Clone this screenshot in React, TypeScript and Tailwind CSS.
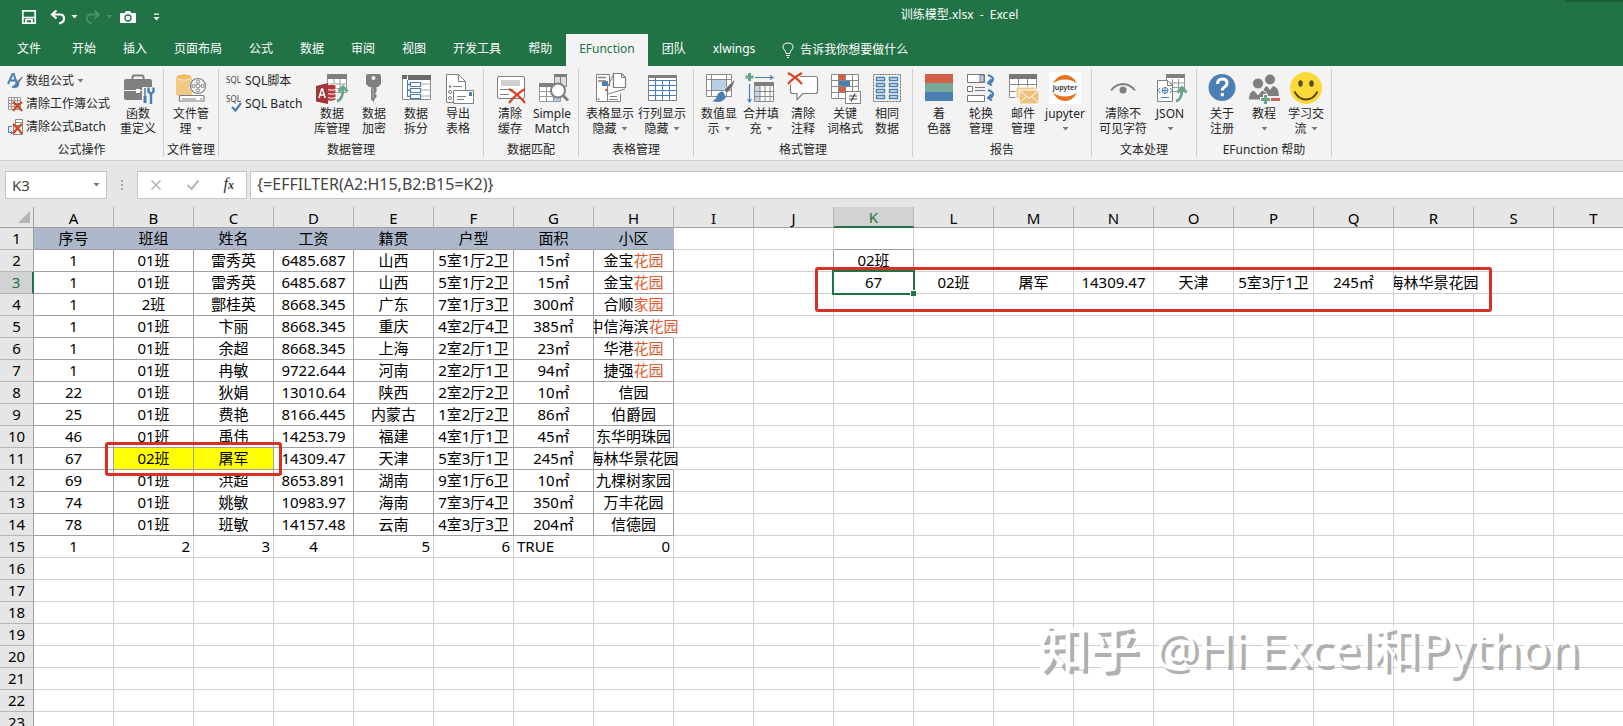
import type { ReactNode } from "react"
import { clsx } from "clsx"

const GRAY = "#7f7f7f"
const BLUE = "#4a7fb5"
const RED = "#d24726"
const GREEN = "#6aa58a"

function Caret({ className = "text-[#777777]" }: { className?: string }) {
  return (
    <svg className={clsx("inline-block shrink-0", className)} width="7" height="4" viewBox="0 0 7 4" aria-hidden="true">
      <path d="M0.5 0h6L3.5 3.5z" fill="currentColor" />
    </svg>
  )
}

function Icon({ size = 32, children }: { size?: number; children: ReactNode }) {
  return (
    <svg className="shrink-0 overflow-visible" width={size} height={size} viewBox={`0 0 ${size} ${size}`} fill="none" aria-hidden="true">
      {children}
    </svg>
  )
}

function RedCross({ x, y, w, h }: { x: number; y: number; w: number; h: number }) {
  return (
    <path
      d={`M${x} ${y}q${w * 0.6} ${h * 0.4} ${w} ${h}M${x + w} ${y}q${-w * 0.6} ${h * 0.4} ${-w} ${h}`}
      stroke={RED}
      strokeWidth="2.2"
    />
  )
}

/* ---------- small ribbon icons ---------- */

const ArrayFormulaIcon = (
  <Icon size={16}>
    <path d="M1 11L5.5 1h1.2L10 11M2.6 7.5h6" stroke={BLUE} strokeWidth="2" />
    <path d="M15.5 4l-4 6-1.6-1.3z" fill={GRAY} stroke={GRAY} />
    <path d="M10.5 9.5c-2 0-2 3-5.5 4.5 3 1.5 6.5 0.5 7-3z" fill={BLUE} stroke={BLUE} />
  </Icon>
)

const ClearBookIcon = (
  <Icon size={16}>
    <path d="M1.5 1.5h12v12h-12zM1.5 4.5h12M1.5 7.5h12M1.5 10.5h12M4.5 1.5v12M7.5 1.5v12M10.5 1.5v12" stroke="#9a9a9a" />
    <RedCross x={6} y={6} w={9} h={9} />
  </Icon>
)

const ClearBatchIcon = (
  <Icon size={16}>
    <path d="M8.5 0.5h7v6h-7zM8.5 3.5h7" fill="#fff" stroke="#8a8a8a" />
    <path d="M5 7.5H1.5v6H5M3.5 11.5l2 2-2 2" stroke={BLUE} />
    <path d="M6.5 6.5h9v9h-9z" fill="#fff" stroke="#8a8a8a" />
    <RedCross x={6} y={5} w={9} h={10} />
  </Icon>
)

const SqlIcon = (
  <Icon size={16}>
    <text x="0" y="10" fontSize="8" fill="#444">SQL</text>
  </Icon>
)

const SqlCheckIcon = (
  <Icon size={16}>
    <text x="0" y="6" fontSize="8" fill="#444">SQL</text>
    <path d="M6 11l3.5 3.5L15 7" stroke={BLUE} strokeWidth="2.2" />
  </Icon>
)

/* ---------- large ribbon icons ---------- */

const BriefcaseIcon = (
  <Icon>
    <path d="M10.5 7V5q0-1.5 1.5-1.5h8q1.5 0 1.5 1.5v2" stroke={GRAY} strokeWidth="2" />
    <path d="M4 7h24q2 0 2 2v17q0 2-2 2H4q-2 0-2-2V9q0-2 2-2z" fill={GRAY} />
    <path d="M2 18.5h28" stroke="#f3f3f3" />
    <path d="M14 17h4v4h-4z" fill="#fff" />
    <path d="M20 15h13v18H20z" fill="#f3f3f3" />
    <path d="M23 16v9" stroke={BLUE} strokeWidth="1.5" />
    <path d="M21.5 24h3v7h-3z" fill={BLUE} />
    <path d="M26.5 15.5v4L29 22l2.5-2.5v-4M29 21v11" stroke={BLUE} strokeWidth="2.4" />
  </Icon>
)

const FileManageIcon = (
  <Icon>
    <path d="M1 5v18q8 3 16 0V5z" fill="#f0c987" />
    <ellipse cx="9" cy="5" rx="8" ry="3" fill="#f3b95f" stroke="#fff" strokeWidth="0.6" />
    <circle cx="23" cy="14" r="8.5" fill="#f3f3f3" />
    <circle cx="23" cy="14" r="7.5" fill="#f8f8f8" stroke={GRAY} strokeWidth="1.2" />
    <circle cx="23" cy="14" r="2" stroke={GRAY} />
    <circle cx="23" cy="9.5" r="1.6" stroke={GRAY} />
    <circle cx="23" cy="18.5" r="1.6" stroke={GRAY} />
    <circle cx="18.5" cy="14" r="1.6" stroke={GRAY} />
    <circle cx="27.5" cy="14" r="1.6" stroke={GRAY} />
    <path d="M4.5 24.5q0-1 1-1H28q1 0 1 1V29H4.5z" fill="#fff" stroke={GRAY} strokeWidth="1.2" />
    <path d="M7 27h14M25 27h2" stroke={GRAY} strokeWidth="1.2" />
  </Icon>
)

const DatabaseIcon = (
  <Icon>
    <path d="M11.5 2.5h19v18h-19zM11.5 12h19M11.5 16.5h19M18 7v14M24 7v14" fill="#fff" stroke="#9a9a9a" />
    <path d="M11 2h20v5H11z" fill={GRAY} />
    <path d="M11 13q5-2 9 0v15q-4 2-9 1z" fill="#b5383b" stroke="#fff" />
    <path d="M11 17.5q5 1.5 9 0M11 21.5q5 1.5 9 0M11 25.5q5 1.5 9 0" stroke="#fff" />
    <path d="M0 14l12-3v21L0 29.5z" fill="#a4373a" />
    <path d="M3 26l2.7-9h0.8l2.7 9M4 23h4.2" stroke="#fff" strokeWidth="1.5" />
    <path d="M21 29q6-1 6-13M22.5 19.5l4.5-5 4.5 5" stroke={GREEN} strokeWidth="2.8" />
  </Icon>
)

const KeyIcon = (
  <Icon>
    <path d="M10 2h11q2 0 2 2v8l-3 3h-1.5v5L17 21.5l1.5 1.5v2L17 26.5 15.5 30 13 27.5V15h-2l-3-3V4q0-2 2-2z" fill={GRAY} />
    <circle cx="15.5" cy="6" r="2" fill="#f3f3f3" />
    <path d="M15 15v11" stroke="#b5b5b5" />
  </Icon>
)

const SplitIcon = (
  <Icon>
    <path d="M2.5 3.5h28v24h-28z" fill="#fff" stroke="#8a8a8a" />
    <path d="M2 3h5v4H2zM8 3h23v5H8z" fill="#6b6b6b" />
    <path d="M8 12h22M8 18h22M8 24h22" stroke="#a8a8a8" />
    <path d="M7.5 8v17M7.5 12.5h3M7.5 18.5h3M7.5 24.5h3" stroke={BLUE} />
    <path d="M10.5 10.5h10v4h-10zM10.5 16.5h10v4h-10zM10.5 22.5h10v4h-10z" fill="#fff" stroke={BLUE} strokeWidth="1.2" />
  </Icon>
)

const ExportIcon = (
  <Icon>
    <path d="M4.5 2.5h12l7 7v21h-19z" fill="#fff" stroke={GRAY} />
    <path d="M16.5 2.5v7h7M11 14.5h9" stroke={GRAY} />
    <circle cx="8" cy="14.5" r="1.2" fill={GRAY} />
    <circle cx="8" cy="20" r="1.5" stroke={GRAY} />
    <circle cx="8" cy="26" r="1.5" stroke={GRAY} />
    <path d="M11.5 18.5h20v13h-20z" fill="#fff" stroke={GRAY} />
    <path d="M27 20h3v4h-3z" fill={BLUE} />
    <path d="M15 24.5h9M15 27.5h7" stroke={GRAY} />
  </Icon>
)

const ClearCacheIcon = (
  <Icon>
    <rect x="3.5" y="4.5" width="27" height="22" rx="1.5" fill="#fff" stroke={GRAY} />
    <path d="M7 8h19v6H7z" fill="#cfcfcf" />
    <path d="M6 17.5h13M6 22.5h9" stroke={GRAY} />
    <RedCross x={15} y={17} w={16} h={14} />
  </Icon>
)

const MatchIcon = (
  <Icon>
    <path d="M18.5 2.5h12v12h-12zM24.5 5v9" fill="#ddd" stroke={GRAY} />
    <path d="M18 2h13v3H18z" fill={GRAY} />
    <path d="M3.5 11.5h21v18h-21zM3.5 19.5h21M3.5 24.5h21M10.5 15v15M17.5 15v15" fill="#fff" stroke="#9a9a9a" />
    <path d="M3 11h14v4H3z" fill={GRAY} />
    <path d="M18 24h6v5h-6z" fill="#b5cde6" />
    <circle cx="22" cy="18.5" r="7" fill="#fff" stroke={GRAY} strokeWidth="2" />
    <path d="M27 23.5l5 5" stroke={GRAY} strokeWidth="3" />
  </Icon>
)

const TableShowIcon = (
  <Icon>
    <path d="M2.5 2.5h13v27h-13z" fill="#fff" stroke={GRAY} />
    <path d="M4 5.5h8M4 9h8" stroke={GRAY} strokeWidth="1.5" />
    <path d="M8.5 9.5h5v20h13v-8" fill="#fff" stroke={GRAY} />
    <path d="M8 10h6v4H8z" fill={BLUE} />
    <path d="M4.5 26v2" stroke={GRAY} strokeWidth="1.5" />
    <path d="M13.5 15L20 1.5M12.5 22.5L31 17M15 27.5h9M16 24.5h7" stroke={GRAY} />
    <path d="M19.5 1.5h8l4 4v10h-12z" fill="#fff" stroke={GRAY} strokeWidth="1.2" />
    <path d="M27.5 1.5v4h4" stroke={GRAY} />
    <circle cx="12.5" cy="18" r="1.2" fill={RED} />
  </Icon>
)

const RowColumnIcon = (
  <Icon>
    <path d="M2.5 3.5h28v25h-28z" fill="#fff" stroke={GRAY} />
    <path d="M2.5 13.5h28M2.5 18.5h28M2.5 23.5h28M16.5 8v20M23.5 8v20" stroke={BLUE} />
    <path d="M2.5 8.5h28M9.5 4v24" stroke={BLUE} strokeWidth="1.2" />
    <path d="M2 3h29v3H2z" fill={GRAY} />
  </Icon>
)

const ValueShowIcon = (
  <Icon>
    <path d="M3.5 2.5h25v22h-25zM3.5 7.5h25M3.5 18.5h25M8.5 2.5v22M23.5 2.5v22" fill="#fff" stroke="#8a8a8a" />
    <path d="M9 8h14v10H9z" fill="#b9cfe4" />
    <path d="M32 7L21 18l3 3q7-6 8-14z" fill="#6b6b6b" stroke="#f3f3f3" strokeWidth="0.6" />
    <path d="M20 19.5q-5 0-6 4.5-1 4-5 5 10 3.5 14-4z" fill={BLUE} />
  </Icon>
)

const MergeFillIcon = (
  <Icon>
    <path d="M4.5 1v8M0.5 5h8" stroke={GREEN} strokeWidth="3" />
    <path d="M10 5.5h18M25 3.5l3 2-3 2M4.5 12v18M2.5 27l2 3 2-3" stroke={BLUE} strokeWidth="1.2" />
    <path d="M9.5 10.5h19v19h-19z" fill="#fff" stroke="#8a8a8a" />
    <path d="M10 14h5v15h-5z" fill="#c3d5e8" />
    <path d="M9 10h20v4H9z" fill={GRAY} />
    <path d="M9.5 19.5h19M9.5 24.5h19M15 14v16M20 14v16M25 14v16" stroke="#8a8a8a" />
  </Icon>
)

const ClearNoteIcon = (
  <Icon>
    <path d="M5.5 4.5h23q2 0 2 2v13q0 2-2 2H16l-6 6v-6H5.5q-2 0-2-2v-13q0-2 2-2z" fill="#fff" stroke={GRAY} strokeWidth="1.2" />
    <path d="M0 0h16l-3 4.5v8H0z" fill="#f3f3f3" />
    <RedCross x={1} y={1} w={14} h={11} />
  </Icon>
)

const KeywordIcon = (
  <Icon>
    <path d="M2.5 2.5h27v24h-27zM2.5 8.5h27M2.5 14.5h27M2.5 20.5h27M9.5 2.5v24M16.5 2.5v24M23.5 2.5v24" fill="#fff" stroke="#8a8a8a" />
    <path d="M10 2h6v6h-6zM10 15h7v5h-7z" fill="#d35f45" />
    <path d="M10 9h11v5H10z" fill={BLUE} />
    <path d="M16.5 19.5h15v12h-15z" fill="#fff" stroke={GRAY} />
    <path d="M20 24h8M20 27h8M26 21.5l-4 8" stroke="#444" strokeWidth="1.2" />
  </Icon>
)

const SameDataIcon = (
  <Icon>
    <path d="M2.5 2.5h27v27h-27z" stroke="#666" strokeDasharray="2 1" />
    <path
      d="M5.5 5.5h8v3h-8zM18.5 5.5h8v3h-8zM5.5 11.5h8v3h-8zM18.5 11.5h8v3h-8zM5.5 17.5h8v3h-8zM18.5 17.5h8v3h-8zM5.5 23.5h8v3h-8zM18.5 23.5h8v3h-8z"
      fill="#dbe8f5"
      stroke={BLUE}
      strokeWidth="1.4"
    />
  </Icon>
)

const ColorIcon = (
  <Icon>
    <path d="M2 2h28v9H2z" fill="#d35f45" />
    <path d="M2 11h28v9H2z" fill="#78a898" />
    <path d="M2 20h28v9H2z" fill={BLUE} />
  </Icon>
)

const RotateIcon = (
  <Icon>
    <path d="M2.5 2.5h17v8h-17zM2.5 14.5h5v5h-5zM2.5 23.5h17v6h-17z" fill="#fff" stroke="#777" />
    <path d="M15 3h4v7h-4z" fill="#b9cfe4" stroke="#777" />
    <path d="M10 15.5h10M10 18.5h10" stroke="#777" />
    <path d="M23 3q6 2 5 5-1 3-4 3M26.5 7L23 11l4 2.5M23 18q6 2 5 5-1 3-4 3M26.5 22L23 26l4 2.5" stroke={BLUE} strokeWidth="2" />
  </Icon>
)

const MailIcon = (
  <Icon>
    <path d="M2.5 2.5h27v23h-27zM2.5 12.5h27M2.5 19.5h27M11.5 6v20M20.5 6v20" fill="#fff" stroke="#8a8a8a" />
    <path d="M2 2h28v5H2z" fill="#777" />
    <path d="M9 15h20v12H9z" fill="#f0c987" stroke="#fff" />
    <path d="M12 18h20v14H12z" fill="#ecc17c" stroke="#fff" />
    <path d="M12.5 18.5l9.5 8 9.5-8M12.5 31l7-6.5M31.5 31L25 24.5" stroke="#fff" />
  </Icon>
)

const JupyterIcon = (
  <Icon>
    <path d="M0 0h32v32H0z" fill="#fff" />
    <path d="M4 11.5Q8 3 16 3t12 8.5Q23 7.5 16 7.5T4 11.5z" fill="#e8731f" />
    <path d="M4 20.5Q8 29 16 29t12-8.5Q23 24.5 16 24.5T4 20.5z" fill="#e8731f" />
    <text x="16" y="18" textAnchor="middle" fontSize="7" fontWeight="600" fill="#333">jupyter</text>
  </Icon>
)

const EyeIcon = (
  <Icon>
    <path d="M4 18.5q5-6.5 12-6.5t12 6.5" stroke={GRAY} strokeWidth="1.8" />
    <circle cx="16" cy="18" r="3.5" fill={GRAY} />
  </Icon>
)

const JsonIcon = (
  <Icon>
    <path d="M12.5 2.5h18v17h-18zM12.5 11h18M12.5 15.5h18M18.5 7v13M24.5 7v13" fill="#fff" stroke="#9a9a9a" />
    <path d="M12 2h19v4H12z" fill={GRAY} />
    <path d="M3.5 8.5h10l5 5v16h-15z" fill="#fff" stroke={GRAY} />
    <path d="M13.5 8.5v5h5" stroke={GRAY} />
    <circle cx="11" cy="18.5" r="3" stroke={BLUE} />
    <path d="M8 18.5h6M11 15.5v6M6 16l-2 2.5L6 21M16 16l2 2.5-2 2.5M7 25.5h8" stroke={BLUE} />
    <path d="M22 29q6-1 6-12M23.5 20.5l4.5-5 4.5 5" stroke={GREEN} strokeWidth="2.8" />
  </Icon>
)

const AboutIcon = (
  <Icon>
    <circle cx="16" cy="15.5" r="13.5" fill={BLUE} />
    <path d="M11.5 12q0-5 4.8-5Q21 7 21 11q0 2.5-2.5 4-2.2 1.2-2.2 3.5M16.3 21v3.3" stroke="#fff" strokeWidth="3" />
  </Icon>
)

const TutorialIcon = (
  <Icon>
    <circle cx="22" cy="7.5" r="5" fill={GRAY} />
    <path d="M15 24q0-9 4-10l3 4 3-4q6 1 6 10z" fill={GRAY} />
    <circle cx="10" cy="11.5" r="5.5" fill={GRAY} stroke="#f3f3f3" />
    <path d="M0.5 28q0-9 5.5-10l4 5 4-5q5.5 1 5.5 10z" fill={GRAY} stroke="#f3f3f3" />
    <path d="M17.5 22v10M12 27.5h20" stroke="#f3f3f3" strokeWidth="5" />
    <path d="M17.5 23v9M13 27.5h9" stroke={GREEN} strokeWidth="3" />
    <path d="M23 27.5h9" stroke="#d0605a" strokeWidth="3" />
  </Icon>
)

const SmileIcon = (
  <Icon>
    <circle cx="16" cy="16" r="16" fill="#fcd93a" />
    <ellipse cx="10.5" cy="11.5" rx="2.2" ry="3.2" fill="#5b4a20" />
    <ellipse cx="21.5" cy="11.5" rx="2.2" ry="3.2" fill="#5b4a20" />
    <path d="M4.5 19.5q4 8 11.5 8t11.5-8" stroke="#5b3f1c" strokeWidth="1.8" />
  </Icon>
)

/* ---------- ribbon ---------- */

interface LargeButtonProps {
  icon: ReactNode
  top: string
  bottom?: string
  menu?: boolean
  wide?: boolean
}

function LargeButton({ icon, top, bottom, menu, wide }: LargeButtonProps) {
  return (
    <button
      type="button"
      className={clsx(
        "flex shrink-0 flex-col items-center whitespace-nowrap pt-[3px] text-xs leading-[15px]",
        wide ? "w-[52px]" : "w-[42px]"
      )}
    >
      {icon}
      <span className="mt-[2px]">{top}</span>
      <span className="flex h-[15px] items-center gap-1">
        {bottom}
        {menu && <Caret />}
      </span>
    </button>
  )
}

function SmallButton({ icon, label, menu }: { icon: ReactNode; label: string; menu?: boolean }) {
  return (
    <button type="button" className="flex h-[23px] items-center gap-[3px] whitespace-nowrap text-xs">
      {icon}
      <span>{label}</span>
      {menu && <Caret />}
    </button>
  )
}

function RibbonGroup({ title, roomy, children }: { title: string; roomy?: boolean; children: ReactNode }) {
  return (
    <section
      className={clsx("flex shrink-0 flex-col border-r border-[#d0d0d0]", roomy ? "px-[5px]" : "px-1")}
      aria-label={title}
    >
      <div className="flex h-[73px]">{children}</div>
      <div className="-mx-1 whitespace-nowrap text-center text-xs leading-[15px]">{title}</div>
    </section>
  )
}

function Ribbon() {
  return (
    <div className="flex overflow-hidden border-b border-[#cfcfcf] bg-[#f3f3f3] pb-[3px] pt-[3px] text-[#262626]">
      <RibbonGroup title="公式操作">
        <div className="flex w-[113px] flex-col pl-[3px]">
          <SmallButton icon={ArrayFormulaIcon} label="数组公式" menu />
          <SmallButton icon={ClearBookIcon} label="清除工作簿公式" />
          <SmallButton icon={ClearBatchIcon} label="清除公式Batch" />
        </div>
        <LargeButton icon={BriefcaseIcon} top="函数" bottom="重定义" />
      </RibbonGroup>
      <RibbonGroup title="文件管理">
        <div className="px-[2px]">
          <LargeButton icon={FileManageIcon} top="文件管" bottom="理" menu />
        </div>
      </RibbonGroup>
      <RibbonGroup title="数据管理">
        <div className="flex w-[88px] flex-col pl-[3px]">
          <SmallButton icon={SqlIcon} label="SQL脚本" />
          <SmallButton icon={SqlCheckIcon} label="SQL Batch" />
        </div>
        <LargeButton icon={DatabaseIcon} top="数据" bottom="库管理" />
        <LargeButton icon={KeyIcon} top="数据" bottom="加密" />
        <LargeButton icon={SplitIcon} top="数据" bottom="拆分" />
        <LargeButton icon={ExportIcon} top="导出" bottom="表格" />
      </RibbonGroup>
      <RibbonGroup title="数据匹配" roomy>
        <LargeButton icon={ClearCacheIcon} top="清除" bottom="缓存" />
        <LargeButton icon={MatchIcon} top="Simple" bottom="Match" />
      </RibbonGroup>
      <RibbonGroup title="表格管理" roomy>
        <LargeButton icon={TableShowIcon} top="表格显示" bottom="隐藏" menu wide />
        <LargeButton icon={RowColumnIcon} top="行列显示" bottom="隐藏" menu wide />
      </RibbonGroup>
      <RibbonGroup title="格式管理">
        <LargeButton icon={ValueShowIcon} top="数值显" bottom="示" menu />
        <LargeButton icon={MergeFillIcon} top="合并填" bottom="充" menu />
        <LargeButton icon={ClearNoteIcon} top="清除" bottom="注释" />
        <LargeButton icon={KeywordIcon} top="关键" bottom="词格式" />
        <LargeButton icon={SameDataIcon} top="相同" bottom="数据" />
      </RibbonGroup>
      <RibbonGroup title="报告" roomy>
        <LargeButton icon={ColorIcon} top="着" bottom="色器" />
        <LargeButton icon={RotateIcon} top="轮换" bottom="管理" />
        <LargeButton icon={MailIcon} top="邮件" bottom="管理" />
        <LargeButton icon={JupyterIcon} top="jupyter" menu />
      </RibbonGroup>
      <RibbonGroup title="文本处理" roomy>
        <LargeButton icon={EyeIcon} top="清除不" bottom="可见字符" wide />
        <LargeButton icon={JsonIcon} top="JSON" menu />
      </RibbonGroup>
      <RibbonGroup title="EFunction 帮助">
        <LargeButton icon={AboutIcon} top="关于" bottom="注册" />
        <LargeButton icon={TutorialIcon} top="教程" menu />
        <LargeButton icon={SmileIcon} top="学习交" bottom="流" menu />
      </RibbonGroup>
    </div>
  )
}

/* ---------- title bar and tabs ---------- */

function TitleBar() {
  return (
    <header className="relative flex h-[34px] items-center text-white">
      <div className="flex w-[296px] shrink-0 items-center pl-[21px]">
        <button type="button" aria-label="保存">
          <svg width="16" height="16" viewBox="0 0 16 16" fill="none">
            <path d="M1.8 1.8h12.4v12.4H1.8zM2 8.5h12M5 14v-3.5h6V14" stroke="#fff" strokeWidth="1.7" />
          </svg>
        </button>
        <button type="button" aria-label="撤消" className="ml-[13px] flex items-center gap-[5px]">
          <svg width="16" height="16" viewBox="0 0 16 16" fill="none">
            <path d="M6.5 1.5L2 5.5l4.5 4M2.5 5.5H10q4 0 4 4t-5 5" stroke="#fff" strokeWidth="2.2" />
          </svg>
          <Caret className="text-white" />
        </button>
        <button type="button" aria-label="恢复" disabled className="ml-[7px] flex items-center gap-[5px]">
          <svg width="16" height="16" viewBox="0 0 16 16" fill="none">
            <path d="M9.5 1.5l4.5 4-4.5 4M13.5 5.5H6q-4 0-4 4t5 5" stroke="#4a9068" strokeWidth="1.8" />
          </svg>
          <Caret className="text-[#4a9068]" />
        </button>
        <button type="button" aria-label="照相机" className="ml-[6px]">
          <svg width="18" height="16" viewBox="0 0 18 16">
            <path d="M2 4h3.5L7 2h4l1.5 2H16q1 0 1 1v8q0 1-1 1H2q-1 0-1-1V5q0-1 1-1z" fill="#fff" />
            <circle cx="9" cy="9" r="3" fill="#fff" stroke="#217346" strokeWidth="1.3" />
          </svg>
        </button>
        <button type="button" aria-label="自定义快速访问工具栏" className="ml-[16px]">
          <svg width="7" height="8" viewBox="0 0 7 8">
            <path d="M1 0.5h5v1.2H1zM0.5 4h6L3.5 7.5z" fill="#fff" />
          </svg>
        </button>
      </div>
      <h1 className="flex-1 whitespace-pre pb-[5px] text-center text-xs">{"训练模型.xlsx  -  Excel"}</h1>
      <div className="absolute right-0 top-0 h-[2px] w-[58px] bg-[#1b5c38]" />
    </header>
  )
}

const TABS = ["开始", "插入", "页面布局", "公式", "数据", "审阅", "视图", "开发工具", "帮助", "EFunction", "团队", "xlwings"]

function TabBar() {
  return (
    <nav className="flex h-8 gap-px text-xs text-white">
      <button type="button" className="w-[58px] shrink-0 pb-[2px]">文件</button>
      {TABS.map((tab) => (
        <button
          key={tab}
          type="button"
          className={clsx(
            "shrink-0 whitespace-nowrap px-[13px] pb-[2px]",
            tab === "EFunction" && "bg-[#f3f3f3] text-[#217346]"
          )}
        >
          {tab}
        </button>
      ))}
      <button type="button" className="flex shrink-0 items-center gap-[6px] whitespace-nowrap px-[13px]">
        <svg width="12" height="16" viewBox="0 0 12 16" fill="none">
          <path d="M4 11.5q0-2-1.5-3.5Q1 6.5 1 5q0-4 5-4t5 4q0 1.5-1.5 3Q8 9.5 8 11.5zM4 13.5h4M5 15.5h2" stroke="#fff" />
        </svg>
        告诉我你想要做什么
      </button>
    </nav>
  )
}

/* ---------- formula bar ---------- */

function FormulaBar() {
  return (
    <div className="flex h-[38px] shrink-0 items-end pl-[5px] text-[#444444]">
      <div className="flex h-7 w-[102px] shrink-0 items-center border border-[#c6c6c6] bg-white pl-[6px] pr-[6px]">
        <input aria-label="名称框" defaultValue="K3" className="w-full min-w-0 bg-transparent text-[15px] outline-none" />
        <Caret />
      </div>
      <div className="flex h-7 w-[30px] shrink-0 flex-col items-center justify-center gap-[2px]">
        <span className="size-[2px] bg-[#a6a6a6]" />
        <span className="size-[2px] bg-[#a6a6a6]" />
        <span className="size-[2px] bg-[#a6a6a6]" />
      </div>
      <div className="flex h-7 w-[110px] shrink-0 items-center justify-around border border-[#c6c6c6] bg-white">
        <button type="button" aria-label="取消">
          <svg width="12" height="12" viewBox="0 0 12 12" fill="none">
            <path d="M1.5 1.5l9 9M10.5 1.5l-9 9" stroke="#b5b5b5" strokeWidth="1.6" />
          </svg>
        </button>
        <button type="button" aria-label="输入">
          <svg width="14" height="12" viewBox="0 0 14 12" fill="none">
            <path d="M1.5 6l4 4 7-8.5" stroke="#b5b5b5" strokeWidth="2" />
          </svg>
        </button>
        <button type="button" aria-label="插入函数" className="flex items-baseline pb-[2px] font-['Liberation_Serif',serif] italic leading-5 text-[#333333]">
          <span className="text-base">f</span>
          <span className="text-xs font-bold">x</span>
        </button>
      </div>
      <input
        aria-label="编辑栏"
        defaultValue="{=EFFILTER(A2:H15,B2:B15=K2)}"
        className="ml-[3px] h-7 min-w-0 flex-1 border border-r-0 border-[#c6c6c6] bg-white pb-[2px] pl-[6px] text-base outline-none"
      />
    </div>
  )
}

/* ---------- sheet ---------- */

const COLUMNS = "ABCDEFGHIJKLMNOPQRST".split("")
const ROW_COUNT = 23

const DATA: string[][] = [
  ["序号", "班组", "姓名", "工资", "籍贯", "户型", "面积", "小区"],
  ["1", "01班", "雷秀英", "6485.687", "山西", "5室1厅2卫", "15㎡", "金宝花园"],
  ["1", "01班", "雷秀英", "6485.687", "山西", "5室1厅2卫", "15㎡", "金宝花园"],
  ["1", "2班", "酆桂英", "8668.345", "广东", "7室1厅3卫", "300㎡", "合顺家园"],
  ["1", "01班", "卞丽", "8668.345", "重庆", "4室2厅4卫", "385㎡", "中信海滨花园"],
  ["1", "01班", "余超", "8668.345", "上海", "2室2厅1卫", "23㎡", "华港花园"],
  ["1", "01班", "冉敏", "9722.644", "河南", "2室2厅1卫", "94㎡", "捷强花园"],
  ["22", "01班", "狄娟", "13010.64", "陕西", "2室2厅2卫", "10㎡", "信园"],
  ["25", "01班", "费艳", "8166.445", "内蒙古", "1室2厅2卫", "86㎡", "伯爵园"],
  ["46", "01班", "禹伟", "14253.79", "福建", "4室1厅1卫", "45㎡", "东华明珠园"],
  ["67", "02班", "屠军", "14309.47", "天津", "5室3厅1卫", "245㎡", "海林华景花园"],
  ["69", "01班", "洪超", "8653.891", "湖南", "9室1厅6卫", "10㎡", "九棵树家园"],
  ["74", "01班", "姚敏", "10983.97", "海南", "7室3厅4卫", "350㎡", "万丰花园"],
  ["78", "01班", "班敏", "14157.48", "云南", "4室3厅3卫", "204㎡", "信德园"],
  ["1", "2", "3", "4", "5", "6", "TRUE", "0"],
]

const FILTER_RESULT = ["67", "02班", "屠军", "14309.47", "天津", "5室3厅1卫", "245㎡", "海林华景花园"]

function cellValue(row: number, col: number) {
  if (row === 2 && col === 10) return "02班"
  if (row === 3 && col >= 10 && col <= 17) return FILTER_RESULT[col - 10]
  return DATA[row - 1]?.[col] ?? ""
}

// only the first rows have their keyword colored
function CellText({ value, row, col }: { value: string; row: number; col: number }) {
  if (col === 7 && row > 1 && row < 8) {
    return (
      <span>
        {value.slice(0, -2)}
        <span className="text-[#e0562b]">{value.slice(-2)}</span>
      </span>
    )
  }
  return <span>{value}</span>
}

function Cell({ row, col }: { row: number; col: number }) {
  const value = cellValue(row, col)
  const inTable = row <= 14 && col <= 7
  const isHead = row === 1 && col <= 7
  const isTotal = row === 15
  const marked = row === 11 && (col === 1 || col === 2)
  const selected = row === 3 && col === 10
  const spills = value.length === 6 && (col === 7 || col === 17)
  const bordered = inTable || (row === 2 && col === 10)
  // neighbours of K2 carry its top and left edges
  const aboveK2 = row === 1 && col === 10
  const besideK2 = row === 2 && col === 9

  return (
    <td
      className={clsx(
        "h-[22px] border-b border-r p-0",
        bordered || aboveK2 ? "border-b-[#a0a0a0]" : "border-b-[#d0d0d0]",
        isHead && "border-r-[#adb9ca] bg-[#adb9ca]",
        !isHead && spills && "border-r-white",
        !isHead && !spills && (bordered || besideK2 ? "border-r-[#a0a0a0]" : "border-r-[#d0d0d0]"),
        marked && "bg-[#ffff00]",
        selected && "relative"
      )}
    >
      <div
        className={clsx(
          "flex h-[21px] w-0 min-w-full items-center whitespace-nowrap leading-[21px] [clip-path:inset(0_-20px_0_0)]",
          isTotal && [1, 2, 4, 5, 7].includes(col) ? "justify-end pr-[3px]" : isTotal && col === 6 ? "pl-[3px]" : "justify-center"
        )}
      >
        {value && <CellText value={value} row={row} col={col} />}
      </div>
      {selected && (
        <div className="absolute -inset-[2px] border-2 border-[#217346]">
          <div className="absolute -bottom-[3px] -right-[3px] size-[6px] border-l border-t border-white bg-[#217346]" />
        </div>
      )}
    </td>
  )
}

function Sheet() {
  return (
    <main className="relative mt-2 min-h-0 flex-1 overflow-hidden text-[15px] text-black">
      <table className="w-[1634px] table-fixed border-separate border-spacing-0 bg-white">
        <colgroup>
          <col className="w-[34px]" />
          {COLUMNS.map((name) => (
            <col key={name} className="w-[80px]" />
          ))}
        </colgroup>
        <thead>
          <tr>
            <th aria-label="全选" className="h-[21px] border-b border-r border-[#a0a0a0] bg-[#e6e6e6] p-0">
              <svg className="ml-auto mr-[3px]" width="12" height="12" viewBox="0 0 12 12" aria-hidden="true">
                <path d="M12 0v12H0z" fill="#b5b5b5" />
              </svg>
            </th>
            {COLUMNS.map((name) => (
              <th
                key={name}
                scope="col"
                className={clsx(
                  "h-[21px] border-r border-r-[#b5b5b5] p-0 pt-px font-normal leading-[18px]",
                  name === "K"
                    ? "border-b-2 border-b-[#217346] bg-[#d2d2d2] text-[#217346]"
                    : "border-b border-b-[#a0a0a0] bg-[#e6e6e6]"
                )}
              >
                {name}
              </th>
            ))}
          </tr>
        </thead>
        <tbody>
          {Array.from({ length: ROW_COUNT }, (_, i) => {
            const row = i + 1
            return (
              <tr key={row}>
                <th
                  scope="row"
                  className={clsx(
                    "h-[22px] border-b border-b-[#b5b5b5] p-0 font-normal leading-[21px]",
                    row === 3
                      ? "border-r-2 border-r-[#217346] bg-[#d2d2d2] text-[#217346]"
                      : "border-r border-r-[#a0a0a0] bg-[#e6e6e6]"
                  )}
                >
                  {row}
                </th>
                {COLUMNS.map((name, col) => (
                  <Cell key={name} row={row} col={col} />
                ))}
              </tr>
            )
          })}
        </tbody>
      </table>

      {/* annotations drawn over the cells */}
      <div className="absolute left-[105px] top-[235px] h-[34px] w-[177px] rounded-[3px] border-[3px] border-[#d93025]" />
      <div className="absolute left-[815px] top-[60px] h-[45px] w-[677px] rounded-[3px] border-[3px] border-[#d93025]" />

      <div className="absolute bottom-[48px] right-[44px] flex items-center gap-4 whitespace-nowrap text-5xl leading-[60px] text-white [text-shadow:4px_4px_0_#b0b0b0]">
        <span className="text-[50px] font-medium leading-[60px]">知乎</span>
        <span>@Hi Excel和Python</span>
      </div>
    </main>
  )
}

export default function App() {
  return (
    <div className="flex h-screen flex-col overflow-hidden bg-[#e6e6e6] font-['Noto_Sans','Noto_Sans_CJK_SC',sans-serif]">
      <div className="shrink-0 bg-[#217346]">
        <TitleBar />
        <TabBar />
        <Ribbon />
      </div>
      <FormulaBar />
      <Sheet />
    </div>
  )
}
